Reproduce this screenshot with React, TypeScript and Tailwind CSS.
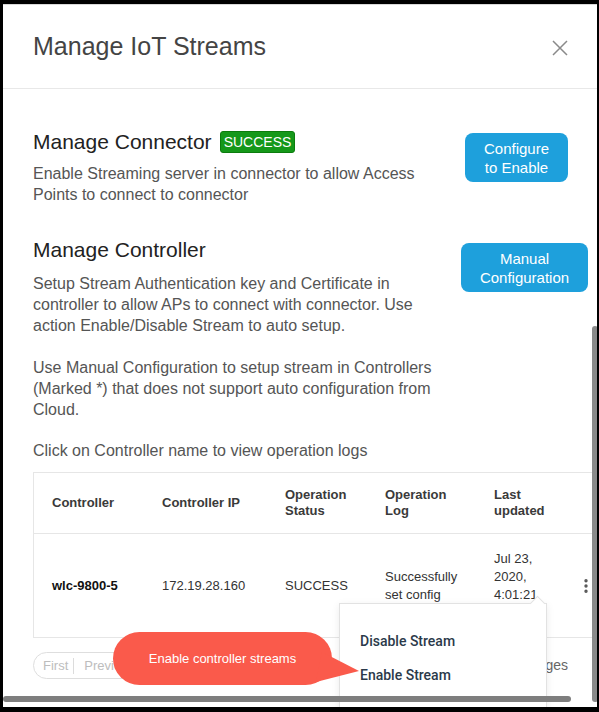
import { EllipsisVertical } from 'lucide-react'

const columns = ['Controller', 'Controller IP', 'Operation\nStatus', 'Operation\nLog', 'Last\nupdated', '']

function Lines({ text }: { text: string }) {
  const parts = text.split('\n')
  return (
    <>
      {parts.map((p, i) => (
        <span key={i} className="block">
          {p}
        </span>
      ))}
    </>
  )
}

function CloseIcon() {
  return (
    <svg width="16" height="16" viewBox="0 0 16 16" fill="none" stroke="#8a8a8a" strokeWidth="1.5">
      <path d="M1 1 L15 15 M15 1 L1 15" />
    </svg>
  )
}

export default function App() {
  return (
    <div className="h-[712px] w-[599px] bg-black pb-[5px] pl-[3px] pr-[2px] pt-[4px] font-['Liberation_Sans',Arial,sans-serif]">
      <div className="relative h-full overflow-hidden border-t border-[#d9d9d9] bg-white">
        <header className="flex h-[84px] items-center justify-between border-b border-[#e8e8e8] pl-[30px] pr-[29px]">
          <h1 className="text-[25px] text-[#444]">Manage IoT Streams</h1>
          <button className="mt-[2px]">
            <CloseIcon />
          </button>
        </header>

        <div className="pl-[30px] pr-[9px] pt-[39px]">
          <section className="flex items-start justify-between">
            <div>
              <div className="flex h-[28px] items-center">
                <h2 className="text-[21px] text-[#222]">Manage Connector</h2>
                <span className="ml-[8px] rounded-[3px] border border-[#0c7c0e] bg-[#15981a] px-[3px] text-[14px] leading-[20px] text-white">
                  SUCCESS
                </span>
              </div>
              <p className="mt-[7px] text-[16px] leading-[21px] text-[#555]">
                Enable Streaming server in connector to allow Access
                <br />
                Points to connect to connector
              </p>
            </div>
            <button className="mr-[20px] mt-[5px] h-[49px] w-[103px] rounded-[8px] bg-[#1ea0dc] text-[15px] leading-[19px] text-white">
              Configure
              <br />
              to Enable
            </button>
          </section>

          <section className="mt-[31px] flex items-start justify-between">
            <div>
              <h2 className="h-[28px] text-[21px] leading-[28px] text-[#222]">Manage Controller</h2>
              <div className="mt-[9px] text-[16px] leading-[21px] text-[#555]">
                <p>
                  Setup Stream Authentication key and Certificate in
                  <br />
                  controller to allow APs to connect with connector. Use
                  <br />
                  action Enable/Disable Stream to auto setup.
                </p>
                <p className="mt-[21px]">
                  Use Manual Configuration to setup stream in Controllers
                  <br />
                  (Marked *) that does not support auto configuration from
                  <br />
                  Cloud.
                </p>
                <p className="mt-[20px]">Click on Controller name to view operation logs</p>
              </div>
            </div>
            <button className="mt-[7px] h-[49px] w-[127px] shrink-0 rounded-[8px] bg-[#1ea0dc] text-[15px] leading-[19px] text-white">
              Manual
              <br />
              Configuration
            </button>
          </section>

          <div className="mt-[11px] w-[620px] border border-[#e6e6e6]">
            <div className="grid h-[61px] grid-cols-[110px_123px_100px_109px_90px_1fr] items-center border-b border-[#e6e6e6] text-[13px] font-bold leading-[16px] text-[#3a3a3a]">
              {columns.map((c, i) => (
                <div key={i} className="pl-[18px]">
                  <Lines text={c} />
                </div>
              ))}
            </div>
            <div className="grid h-[103px] grid-cols-[110px_123px_100px_109px_90px_1fr] items-center text-[13px] leading-[18px] text-[#333]">
              <div className="pl-[18px] font-bold text-[#111]">wlc-9800-5</div>
              <div className="pl-[18px]">172.19.28.160</div>
              <div className="pl-[18px]">SUCCESS</div>
              <div className="pl-[18px]">
                <Lines text={'Successfully\nset config'} />
              </div>
              <div className="pl-[18px]">
                <Lines text={'Jul 23,\n2020,\n4:01:21\nPM'} />
              </div>
              <div className="pl-[11px] text-[#555]">
                <EllipsisVertical size={18} strokeWidth={2.5} />
              </div>
            </div>
          </div>

          <div className="mr-[20px] mt-[14px] flex items-center justify-between">
            <div className="flex h-[27px] items-center rounded-full border border-[#dedede] px-[9px] text-[13px] text-[#bdbdbd]">
              <span>First</span>
              <span className="mx-[5px] h-[16px] w-px bg-[#dcdcdc]" />
              <span className="ml-[5px]">Previous</span>
              <span className="mx-[8px] h-[16px] w-px bg-[#dcdcdc]" />
              <span>Next</span>
            </div>
            <span className="text-[14px] text-[#666]">Total 1 pages</span>
          </div>
        </div>

        <div className="absolute left-[336px] top-[598px] h-[120px] w-[208px] border border-[#e2e2e2] bg-white pt-[20px] shadow-[0_2px_8px_rgba(0,0,0,0.08)]">
          <div className="absolute left-[192px] top-[-6px] h-[11px] w-[11px] rotate-45 border-l border-t border-[#e2e2e2] bg-white" />
          <div className="flex h-[34px] items-center pl-[20px] font-['Roboto',Arial,sans-serif] text-[14px] font-medium text-[#2b3a4a]">
            Disable Stream
          </div>
          <div className="flex h-[34px] items-center pl-[20px] font-['Roboto',Arial,sans-serif] text-[14px] font-medium text-[#2b3a4a]">
            Enable Stream
          </div>
        </div>

        <div className="absolute left-[110px] top-[627px] flex h-[53px] w-[219px] items-center justify-center rounded-full bg-[#fa5a4b] text-[13px] text-white">
          Enable controller streams
        </div>
        <svg className="absolute left-[307px] top-[640px]" width="52" height="45" viewBox="0 0 52 45">
          <polygon points="12,7 49,26 6,37" fill="#fa5a4b" />
        </svg>

        <div className="absolute left-[589px] top-[321px] h-[376px] w-[6px] rounded-full bg-[#8a8a8a]" />
        <div className="absolute left-0 top-[691px] h-[6px] w-[568px] rounded-full bg-[#7e7e7e]" />
      </div>
    </div>
  )
}
